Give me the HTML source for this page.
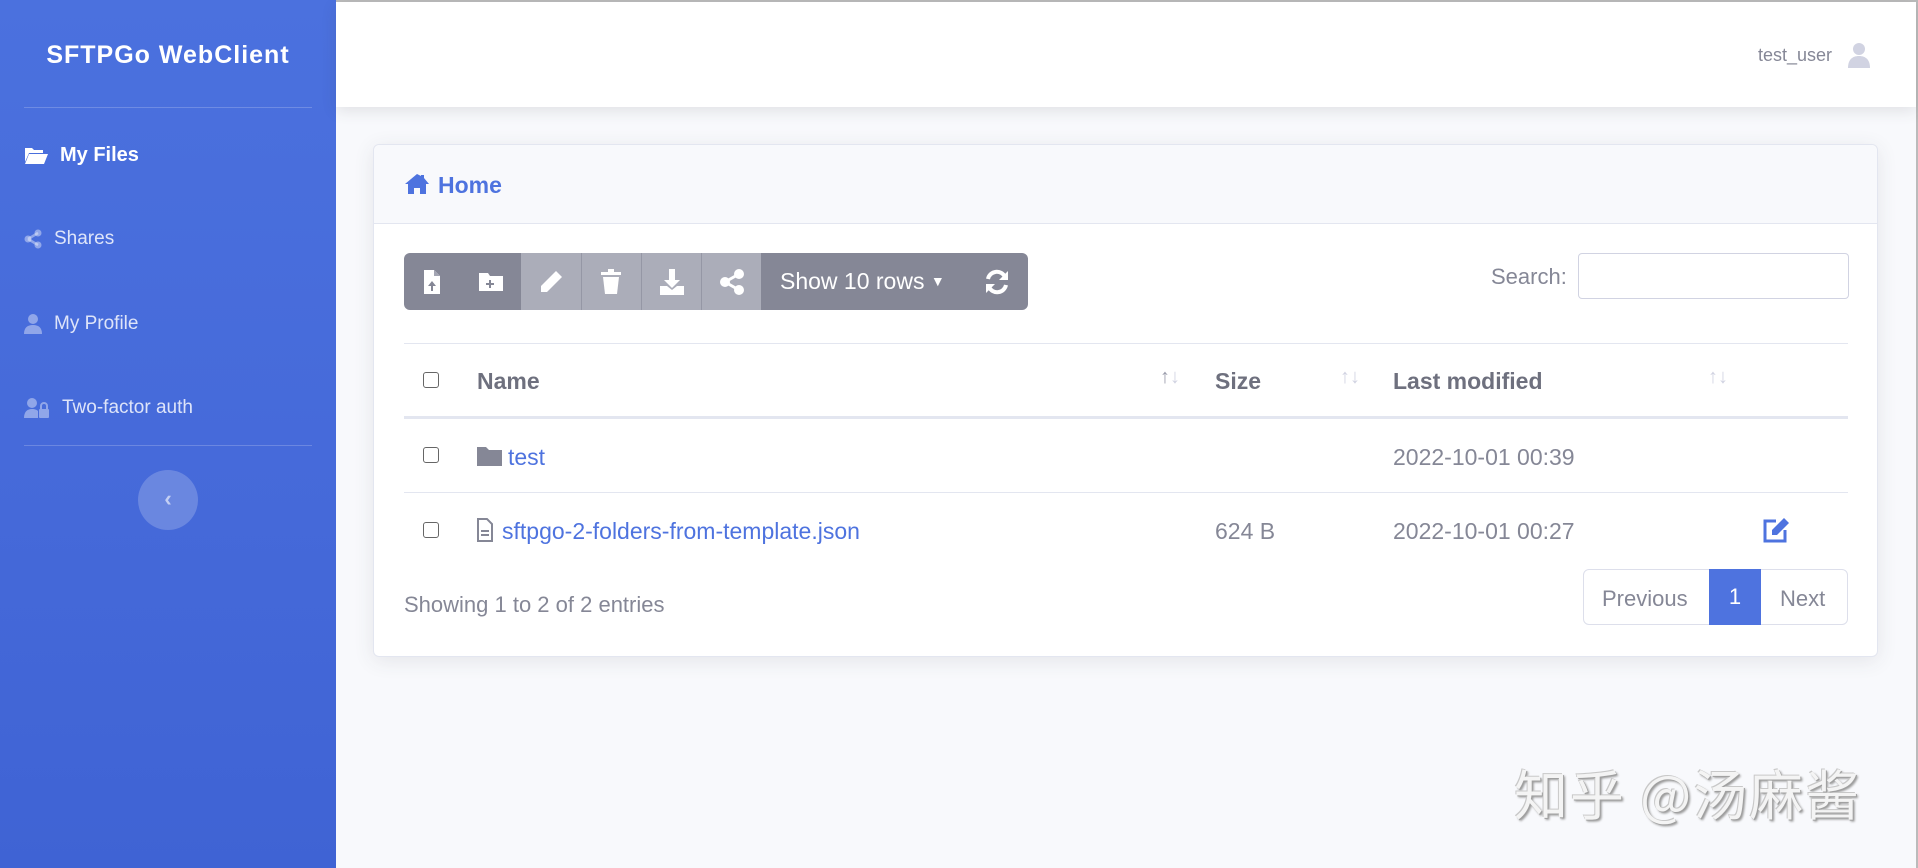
<!DOCTYPE html>
<html><head><meta charset="utf-8"><style>
*{box-sizing:border-box;margin:0;padding:0}
body{width:1918px;height:868px;overflow:hidden;font-family:"Liberation Sans","Noto Sans CJK SC",sans-serif;background:#f8f9fc;position:relative;color:#858796}
.abs{position:absolute}
#side{left:0;top:0;width:336px;height:868px;background:linear-gradient(180deg,#4b71de 0%,#4569d9 60%,#3f63d4 100%)}
.brand{left:0;width:336px;top:41px;text-align:center;color:#fff;font-weight:bold;font-size:25px;letter-spacing:1px}
.hr{height:1px;background:rgba(255,255,255,.2);left:24px;width:288px}
.nav{color:rgba(255,255,255,.82);font-size:19px;left:24px;display:flex;align-items:center}
.nav svg{fill:rgba(255,255,255,.4);margin-right:12px}
#top{left:336px;top:2px;width:1580px;height:105px;background:#fff;box-shadow:0 4px 14px rgba(58,59,69,.12)}
#card{left:373px;top:144px;width:1505px;height:513px;background:#fff;border:1px solid #e3e6f0;border-radius:6px;box-shadow:0 4px 20px rgba(58,59,69,.1)}
.ch{left:0;top:0;width:1503px;height:79px;background:#f8f9fc;border-bottom:1px solid #e3e6f0;border-radius:6px 6px 0 0}
.cb{width:16px;height:16px;border:1.5px solid #666;border-radius:3px;background:#fff}
.th{font-weight:bold;color:#6e707e;font-size:23px}
.td{font-size:23px;color:#858796}
a{color:#4e73df;text-decoration:none}
</style></head><body>
<div class="abs" style="left:0;top:0;width:1918px;height:2px;background:#bbb"></div>
<div class="abs" style="right:0;top:0;width:2px;height:868px;background:#bbb"></div>
<div id="side" class="abs">
 <div class="abs brand">SFTPGo WebClient</div>
 <div class="abs hr" style="top:107px"></div>
 <div class="abs nav" style="top:144px;color:#fff;font-weight:bold;font-size:20px"><svg width="24" height="20" viewBox="0 0 24 20" style="fill:#fff"><path d="M1 2h7l2 2h9v3H5L1 16z M5 8h19l-4 10H1z"/></svg>My Files</div>
 <div class="abs nav" style="top:228px"><svg width="18" height="20" viewBox="0 0 18 20"><circle cx="14" cy="4" r="3.5"/><circle cx="4" cy="10" r="3.5"/><circle cx="14" cy="16" r="3.5"/><path d="M4 10L14 4M4 10l10 6" stroke="rgba(255,255,255,.4)" stroke-width="2.5"/></svg>Shares</div>
 <div class="abs nav" style="top:313px"><svg width="18" height="22" viewBox="0 0 18 22"><circle cx="9" cy="6" r="5"/><path d="M0 21c0-6 3-9 9-9s9 3 9 9z"/></svg>My Profile</div>
 <div class="abs nav" style="top:397px"><svg width="26" height="22" viewBox="0 0 26 22"><circle cx="8" cy="6" r="5"/><path d="M0 21c0-6 3-9 8-9 3 0 5 1 6 2v7z"/><rect x="15" y="12" width="10" height="9" rx="1"/><path d="M17 12v-3a3 3 0 0 1 6 0v3" fill="none" stroke="rgba(255,255,255,.4)" stroke-width="2"/></svg>Two-factor auth</div>
 <div class="abs hr" style="top:445px"></div>
 <div class="abs" style="left:138px;top:470px;width:60px;height:60px;border-radius:50%;background:rgba(255,255,255,.2);color:rgba(255,255,255,.6);font-weight:bold;font-size:22px;text-align:center;line-height:58px">&#8249;</div>
</div>
<div id="top" class="abs">
 <div class="abs" style="left:1422px;top:43px;font-size:18px;color:#858796">test_user</div>
 <svg class="abs" style="left:1512px;top:40px" width="22" height="26" viewBox="0 0 22 26"><circle cx="11" cy="7" r="6" fill="#d1d3e2"/><path d="M0 26c0-8 4-12 11-12s11 4 11 12z" fill="#d1d3e2"/></svg>
</div>
<div id="card" class="abs">
 <div class="abs ch"></div>
 <svg class="abs" style="left:30px;top:28px" width="26" height="22" viewBox="0 0 26 22"><path d="M13 1L1 11h3v10h6v-6h6v6h6V11h3L20 5V2h-3v1z" fill="#4e73df"/></svg>
 <div class="abs" style="left:64px;top:27px;font-weight:bold;font-size:23px;color:#4e73df">Home</div>
</div>
<div class="abs" style="left:404px;top:253px;width:624px;height:57px;border-radius:6px;background:#858796;overflow:hidden">
 <div class="abs" style="left:117px;top:0;width:240px;height:57px;background:#abadb9"></div>
 <div class="abs" style="left:177px;top:0;width:1px;height:57px;background:#9597a5"></div>
 <div class="abs" style="left:237px;top:0;width:1px;height:57px;background:#9597a5"></div>
 <div class="abs" style="left:297px;top:0;width:1px;height:57px;background:#9597a5"></div>
</div>
<svg class="abs" style="left:423px;top:269px" width="18" height="26" viewBox="0 0 18 26"><path d="M1 1h10l6 6v18H1z" fill="#fff"/><path d="M11 1v6h6" fill="#a3a5b3"/><path d="M9 12l-4 5h3v5h2v-5h3z" fill="#858796"/></svg>
<svg class="abs" style="left:478px;top:272px" width="26" height="20" viewBox="0 0 26 20"><path d="M1 1h9l2 3h13v15H1z" fill="#fff"/><path d="M12 8v8M8 12h8" stroke="#858796" stroke-width="2"/></svg>
<svg class="abs" style="left:539px;top:270px" width="24" height="24" viewBox="0 0 24 24"><path d="M17 1l6 6L8 22H2v-6z" fill="#fff"/></svg>
<svg class="abs" style="left:600px;top:269px" width="22" height="26" viewBox="0 0 22 26"><rect x="1" y="3" width="20" height="3" fill="#fff"/><rect x="8" y="0" width="6" height="3" fill="#fff"/><path d="M3 8h16l-2 17H5z" fill="#fff"/></svg>
<svg class="abs" style="left:659px;top:268px" width="26" height="28" viewBox="0 0 26 28"><path d="M10 1h6v11h5l-8 8-8-8h5z" fill="#fff"/><path d="M1 18h7l5 4 5-4h7v9H1z" fill="#fff"/></svg>
<svg class="abs" style="left:720px;top:269px" width="24" height="26" viewBox="0 0 24 26"><circle cx="19" cy="5" r="5" fill="#fff"/><circle cx="5" cy="13" r="5" fill="#fff"/><circle cx="19" cy="21" r="5" fill="#fff"/><path d="M5 13L19 5M5 13l14 8" stroke="#fff" stroke-width="3"/></svg>
<div class="abs" style="left:780px;top:268px;font-size:23px;color:#fff">Show 10 rows <span style="font-size:14px;vertical-align:3px">&#9660;</span></div>
<svg class="abs" style="left:984px;top:269px" width="26" height="26" viewBox="0 0 26 26"><path d="M21 8A9 9 0 0 0 4 10" fill="none" stroke="#fff" stroke-width="4"/><path d="M24 2v9h-9z" fill="#fff"/><path d="M5 18a9 9 0 0 0 17-2" fill="none" stroke="#fff" stroke-width="4"/><path d="M2 24v-9h9z" fill="#fff"/></svg>
<div class="abs" style="left:1491px;top:264px;font-size:22px">Search:</div>
<div class="abs" style="left:1578px;top:253px;width:271px;height:46px;border:1px solid #d1d3e2;border-radius:4px;background:#fff"></div>
<div class="abs" style="left:404px;top:343px;width:1444px;height:1px;background:#e3e6f0"></div>
<div class="abs" style="left:404px;top:416px;width:1444px;height:3px;background:#e3e6f0"></div>
<div class="abs" style="left:404px;top:492px;width:1444px;height:1px;background:#e3e6f0"></div>
<div class="abs cb" style="left:423px;top:372px"></div>
<div class="abs th" style="left:477px;top:368px">Name</div>
<div class="abs" style="left:1160px;top:366px;font-size:20px;color:#9a9cab">&#8593;<span style="color:#d1d3e2">&#8595;</span></div>
<div class="abs th" style="left:1215px;top:368px">Size</div>
<div class="abs" style="left:1340px;top:366px;font-size:20px;color:#d1d3e2">&#8593;&#8595;</div>
<div class="abs th" style="left:1393px;top:368px">Last modified</div>
<div class="abs" style="left:1708px;top:366px;font-size:20px;color:#d1d3e2">&#8593;&#8595;</div>
<div class="abs cb" style="left:423px;top:447px"></div>
<svg class="abs" style="left:477px;top:446px" width="25" height="20" viewBox="0 0 25 20"><path d="M0 1h9l3 3h13v16H0z" fill="#858796"/></svg>
<div class="abs td" style="left:508px;top:444px"><a>test</a></div>
<div class="abs td" style="left:1393px;top:444px">2022-10-01 00:39</div>
<div class="abs cb" style="left:423px;top:522px"></div>
<svg class="abs" style="left:477px;top:518px" width="16" height="24" viewBox="0 0 16 24"><path d="M1 1h9l5 5v17H1z" fill="none" stroke="#858796" stroke-width="2"/><path d="M4 13h8M4 17h8" stroke="#858796" stroke-width="2"/></svg>
<div class="abs td" style="left:502px;top:518px"><a>sftpgo-2-folders-from-template.json</a></div>
<div class="abs td" style="left:1215px;top:518px">624 B</div>
<div class="abs td" style="left:1393px;top:518px">2022-10-01 00:27</div>
<svg class="abs" style="left:1762px;top:517px" width="28" height="26" viewBox="0 0 28 26"><path d="M14 4H3v20h20V13" fill="none" stroke="#4e73df" stroke-width="3"/><path d="M22 1l5 5-12 12H10v-5z" fill="#4e73df"/></svg>
<div class="abs" style="left:404px;top:592px;font-size:22px">Showing 1 to 2 of 2 entries</div>
<div class="abs" style="left:1583px;top:569px;width:265px;height:56px;border:1px solid #dddfeb;border-radius:6px;background:#fff"></div>
<div class="abs" style="left:1602px;top:586px;font-size:22px">Previous</div>
<div class="abs" style="left:1709px;top:569px;width:52px;height:56px;background:#4e73df;color:#fff;font-size:22px;text-align:center;line-height:56px">1</div>
<div class="abs" style="left:1780px;top:586px;font-size:22px">Next</div>
<div class="abs" style="left:1514px;top:752px;font-size:54px;letter-spacing:2px;color:#f4f4f4;text-shadow:1px 1px 0 #a0a0a0,-1px -1px 0 #c8c8c8,2px 2px 2px #999;font-family:'Noto Sans CJK SC',sans-serif;white-space:nowrap">知乎 @汤麻酱</div>
</body></html>
